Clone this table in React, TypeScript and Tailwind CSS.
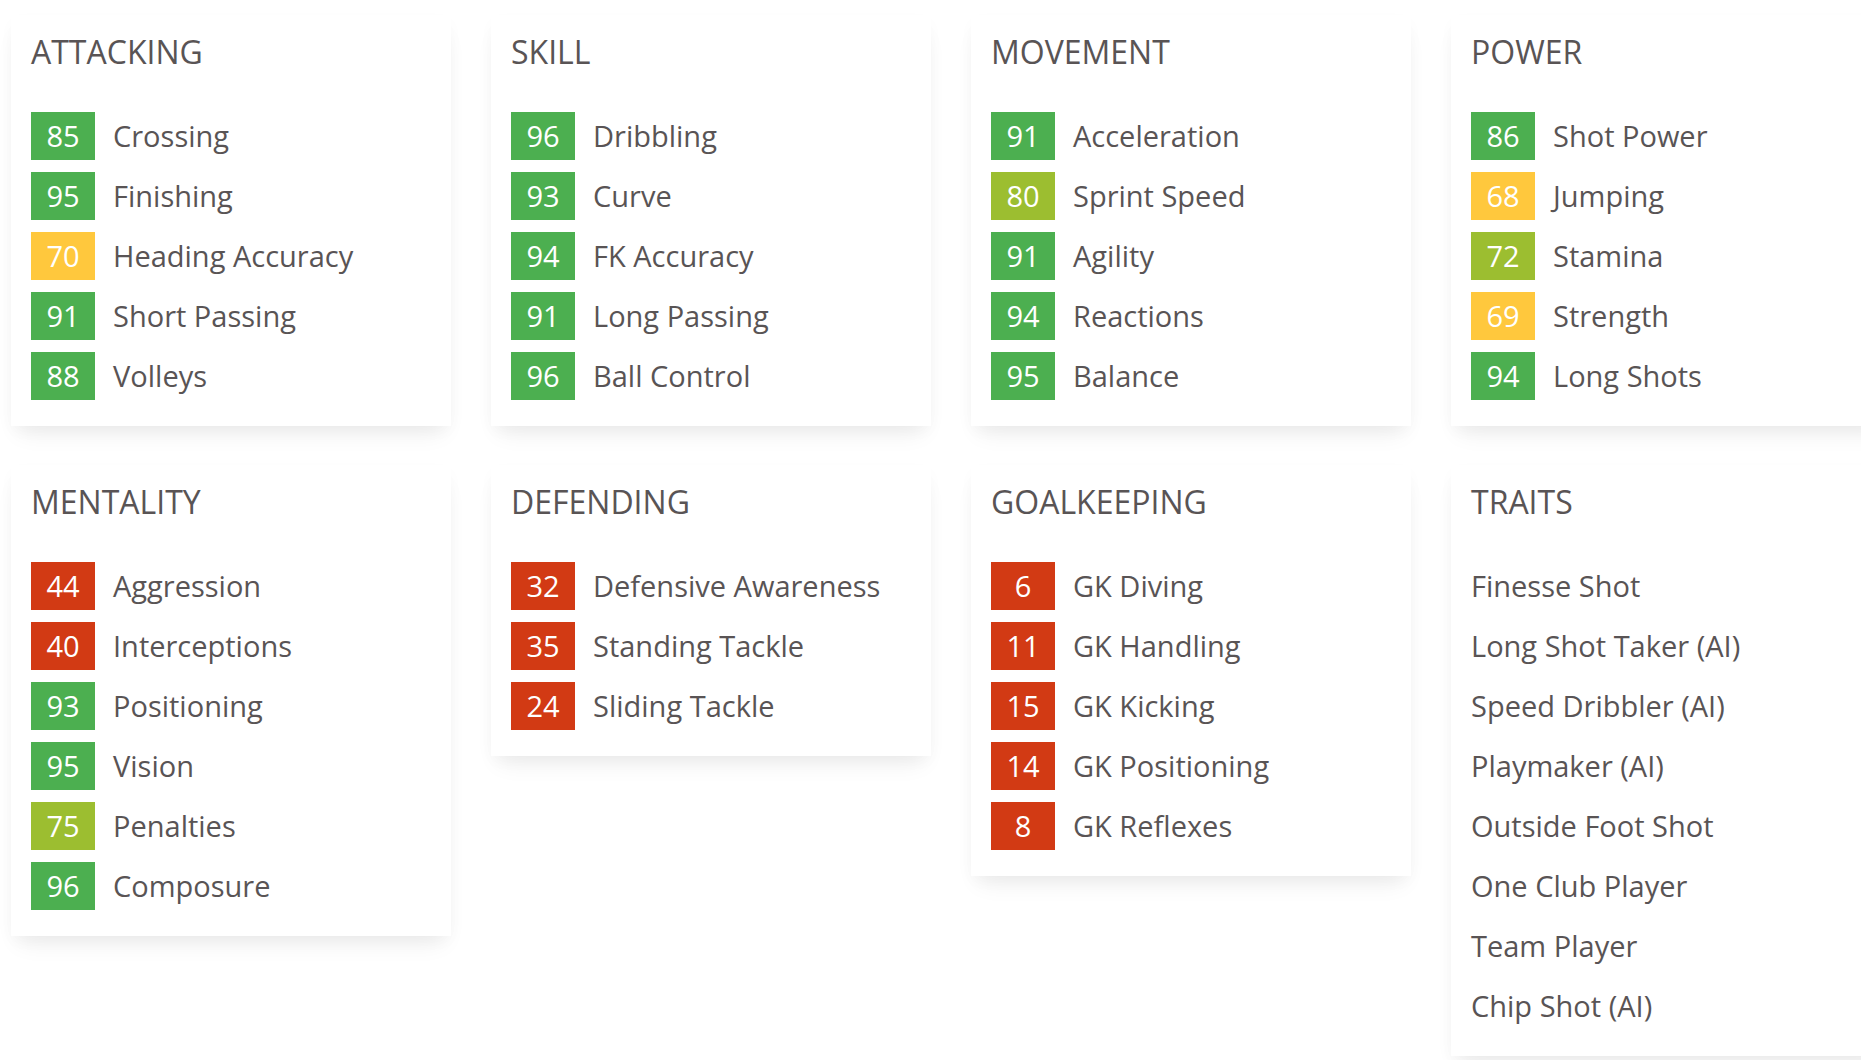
import React from "react";

type Stat = { v: number; n: string };
type Card = { title: string; stats?: Stat[]; traits?: string[] };

const badgeClass = (v: number) => {
  if (v >= 81) return "bg-[#4caf50]";
  if (v >= 70) return "bg-[#9cbe30]";
  if (v >= 50) return "bg-[#ffc83d]";
  return "bg-[#d23a14]";
};

const badge = (v: number) => {
  if (v === 70) return "bg-[#ffc83d]";
  return badgeClass(v);
};

const cards: Card[] = [
  {
    title: "ATTACKING",
    stats: [
      { v: 85, n: "Crossing" },
      { v: 95, n: "Finishing" },
      { v: 70, n: "Heading Accuracy" },
      { v: 91, n: "Short Passing" },
      { v: 88, n: "Volleys" },
    ],
  },
  {
    title: "SKILL",
    stats: [
      { v: 96, n: "Dribbling" },
      { v: 93, n: "Curve" },
      { v: 94, n: "FK Accuracy" },
      { v: 91, n: "Long Passing" },
      { v: 96, n: "Ball Control" },
    ],
  },
  {
    title: "MOVEMENT",
    stats: [
      { v: 91, n: "Acceleration" },
      { v: 80, n: "Sprint Speed" },
      { v: 91, n: "Agility" },
      { v: 94, n: "Reactions" },
      { v: 95, n: "Balance" },
    ],
  },
  {
    title: "POWER",
    stats: [
      { v: 86, n: "Shot Power" },
      { v: 68, n: "Jumping" },
      { v: 72, n: "Stamina" },
      { v: 69, n: "Strength" },
      { v: 94, n: "Long Shots" },
    ],
  },
  {
    title: "MENTALITY",
    stats: [
      { v: 44, n: "Aggression" },
      { v: 40, n: "Interceptions" },
      { v: 93, n: "Positioning" },
      { v: 95, n: "Vision" },
      { v: 75, n: "Penalties" },
      { v: 96, n: "Composure" },
    ],
  },
  {
    title: "DEFENDING",
    stats: [
      { v: 32, n: "Defensive Awareness" },
      { v: 35, n: "Standing Tackle" },
      { v: 24, n: "Sliding Tackle" },
    ],
  },
  {
    title: "GOALKEEPING",
    stats: [
      { v: 6, n: "GK Diving" },
      { v: 11, n: "GK Handling" },
      { v: 15, n: "GK Kicking" },
      { v: 14, n: "GK Positioning" },
      { v: 8, n: "GK Reflexes" },
    ],
  },
  {
    title: "TRAITS",
    traits: [
      "Finesse Shot",
      "Long Shot Taker (AI)",
      "Speed Dribbler (AI)",
      "Playmaker (AI)",
      "Outside Foot Shot",
      "One Club Player",
      "Team Player",
      "Chip Shot (AI)",
    ],
  },
];

function CardView({ card }: { card: Card }) {
  return (
    <div className="w-[440px] bg-white px-5 pt-[17px] pb-[26px] shadow-[0_14px_22px_-8px_rgba(0,0,0,0.08),0_6px_16px_-2px_rgba(0,0,0,0.03)]">
      <div className="h-[40px] text-[32px] leading-[40px] text-[#595455]">{card.title}</div>
      <div className="mt-[40px] flex flex-col gap-3">
        {card.stats?.map((s) => (
          <div key={s.n} className="flex h-12 items-center">
            <div
              className={`flex h-12 w-16 shrink-0 items-center justify-center pb-[2px] text-[29px] leading-none text-white ${badge(s.v)}`}
            >
              {s.v}
            </div>
            <div className="ml-[18px] pb-[2px] text-[29px] leading-none text-[#595455]">{s.n}</div>
          </div>
        ))}
        {card.traits?.map((t) => (
          <div key={t} className="flex h-12 items-center pb-[2px] text-[29px] leading-none text-[#595455]">
            {t}
          </div>
        ))}
      </div>
    </div>
  );
}

export default function App() {
  return (
    <div
      className="h-screen w-full overflow-hidden bg-white pl-[11px] pt-[15px]"
      style={{ fontFamily: '"Open Sans", "Noto Sans", sans-serif' }}
    >
      <div className="grid w-max grid-cols-[440px_440px_440px_440px] items-start gap-x-10 gap-y-[39px]">
        {cards.map((c) => (
          <CardView key={c.title} card={c} />
        ))}
      </div>
    </div>
  );
}
